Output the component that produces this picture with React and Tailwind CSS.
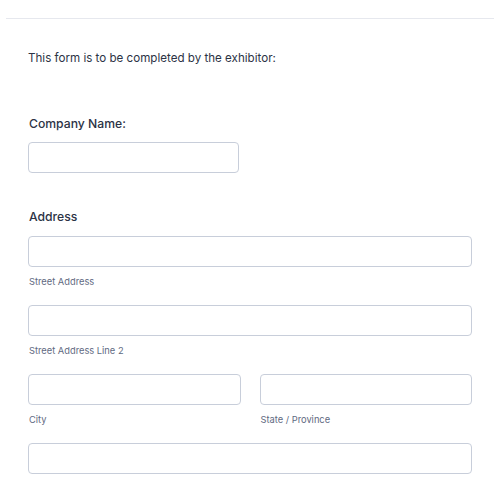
const Field = ({ className = "" }) => (
  <div className={`h-[31px] rounded-[4px] border border-[#c8ceda] bg-white ${className}`} />
)

const SubLabel = ({ children }) => (
  <div className="mt-[7px] pl-px text-[9.3px] leading-[15px] text-[#5f6a82]">{children}</div>
)

export default function App() {
  return (
    <div
      className="w-[500px] h-[484px] overflow-hidden bg-white text-[#2c3345]"
      style={{ fontFamily: "Inter, 'Noto Sans', sans-serif" }}
    >
      {/* divider */}
      <div className="mx-[6px] pt-[18px]">
        <div className="h-px bg-[#e6e8ee]" />
      </div>

      <div className="px-[28px]">
        <p className="mt-[29px] text-[11.6px] leading-5">
          This form is to be completed by the exhibitor:
        </p>

        {/* Company */}
        <div className="mt-[46px] pl-px text-[12.2px] font-medium leading-5">Company Name:</div>
        <Field className="mt-[8px] w-[211px]" />

        {/* Address */}
        <div className="mt-[34px] pl-px text-[12.2px] font-medium leading-5">Address</div>
        <Field className="mt-[9px] w-[444px]" />
        <SubLabel>Street Address</SubLabel>

        <Field className="mt-[16px] w-[444px]" />
        <SubLabel>Street Address Line 2</SubLabel>

        <div className="mt-[16px] grid w-[444px] grid-cols-2 gap-[19px]">
          <div>
            <Field />
            <SubLabel>City</SubLabel>
          </div>
          <div>
            <Field />
            <SubLabel>State / Province</SubLabel>
          </div>
        </div>

        <Field className="mt-[16px] w-[444px]" />
      </div>
    </div>
  )
}
